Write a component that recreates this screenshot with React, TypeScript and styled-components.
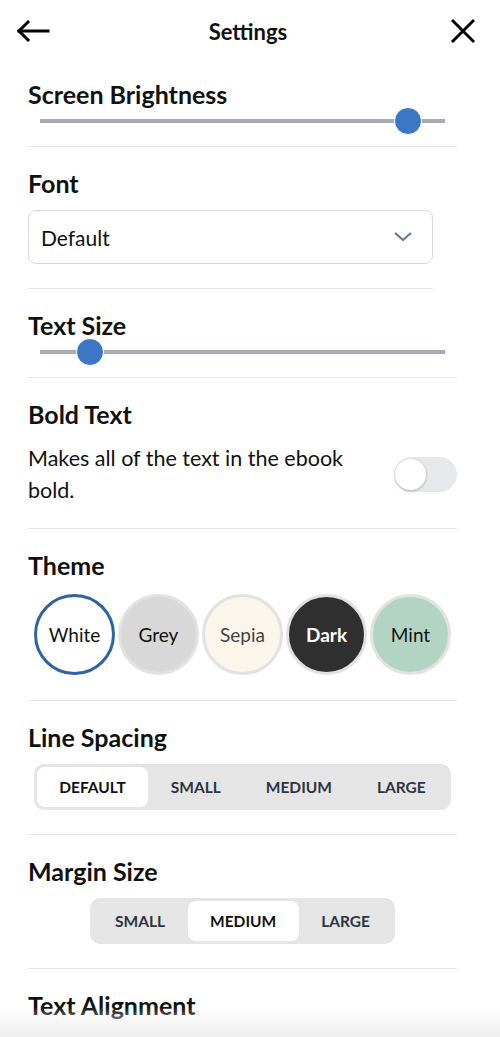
import React from "react";
import styled, { createGlobalStyle } from "styled-components";

const GlobalStyle = createGlobalStyle`
  html, body { margin: 0; padding: 0; background: #ffffff; }
  body { font-family: "Lato", "Liberation Sans", sans-serif; color: #111111; }
  * { box-sizing: border-box; }
`;

const Page = styled.div`
  width: 500px;
  min-height: 1037px;
  background: #fff;
  position: relative;
  overflow: hidden;
`;

const Header = styled.header`
  height: 62px;
  display: flex;
  align-items: center;
  justify-content: space-between;
  padding: 0 20px 0 16px;
`;

const IconButton = styled.button`
  border: none;
  background: none;
  padding: 0;
  width: 34px;
  height: 34px;
  display: flex;
  align-items: center;
  justify-content: center;
  color: #000;
`;

const Title = styled.h1`
  margin: 0;
  font-size: 22px;
  font-weight: 700;
`;

const Content = styled.main`
  padding: 0 43px 0 28px;
`;

const Section = styled.section<{ $top?: number; $bottom: number; $narrow?: boolean }>`
  padding-top: ${(p) => p.$top ?? 22}px;
  padding-bottom: ${(p) => p.$bottom}px;
  border-bottom: 1px solid #e6e6e8;
  width: ${(p) => (p.$narrow ? "405px" : "auto")};
  &:last-child { border-bottom: none; }
`;

const Heading = styled.h2<{ $gap?: number }>`
  margin: 0 0 ${(p) => p.$gap ?? 0}px;
  font-size: 25px;
  line-height: 28px;
  font-weight: 700;
`;

const SliderWrap = styled.div`
  position: relative;
  height: 26px;
  margin: 0 12px;
  display: flex;
  align-items: center;
`;

const Track = styled.div`
  width: 100%;
  height: 4px;
  background: #a7abb5;
`;

const Thumb = styled.div`
  position: absolute;
  top: 50%;
  width: 28px;
  height: 28px;
  margin: -14px 0 0 -14px;
  border-radius: 50%;
  background: #3b77c4;
  border: 1px solid #ffffff;
`;

const Select = styled.div`
  height: 54px;
  border: 1px solid #d6d9de;
  border-radius: 8px;
  display: flex;
  align-items: center;
  justify-content: space-between;
  padding: 0 20px 0 12px;
  font-size: 21px;
`;

const Row = styled.div`
  display: flex;
  align-items: center;
  justify-content: space-between;
  gap: 20px;
`;

const Description = styled.p`
  margin: 0;
  font-size: 21.5px;
  line-height: 32px;
  max-width: 340px;
`;

const Toggle = styled.div`
  width: 63px;
  height: 35px;
  border-radius: 18px;
  background: #e7e8ec;
  position: relative;
  flex-shrink: 0;
`;

const Knob = styled.div`
  position: absolute;
  left: 1px;
  top: 2px;
  width: 31px;
  height: 31px;
  border-radius: 50%;
  background: #fff;
  box-shadow: 0 1px 3px rgba(0, 0, 0, 0.25);
`;

const Swatches = styled.div`
  display: flex;
  justify-content: center;
  gap: 3px;
`;

const Swatch = styled.button<{ $bg: string; $fg: string; $active?: boolean }>`
  width: 81px;
  height: 81px;
  border-radius: 50%;
  background: ${(p) => p.$bg};
  color: ${(p) => p.$fg};
  border: ${(p) => (p.$active ? "3px solid #2f62a6" : "3px solid #e2e2e2")};
  font-family: "Lato", "Liberation Sans", sans-serif;
  font-size: 19px;
  font-weight: ${(p) => (p.$fg === "#ffffff" ? 700 : 400)};
  padding: 0;
  display: flex;
  align-items: center;
  justify-content: center;
`;

const SegmentWrap = styled.div`
  display: flex;
  justify-content: center;
`;

const Segmented = styled.div`
  display: inline-flex;
  background: #e5e5e5;
  border-radius: 10px;
  padding: 3px;
`;

const Segment = styled.button<{ $active?: boolean }>`
  border: none;
  height: 40px;
  padding: 0 22.5px;
  border-radius: 8px;
  background: ${(p) => (p.$active ? "#ffffff" : "transparent")};
  color: ${(p) => (p.$active ? "#111111" : "#2c3442")};
  font-family: "Lato", "Liberation Sans", sans-serif;
  font-size: 15.5px;
  font-weight: 700;
`;

const BottomFade = styled.div`
  position: fixed;
  left: 0;
  right: 0;
  bottom: 0;
  height: 30px;
  background: linear-gradient(to bottom, rgba(240, 240, 240, 0), rgba(238, 238, 238, 1));
  pointer-events: none;
`;

const themes = [
  { name: "White", bg: "#ffffff", fg: "#111111", active: true },
  { name: "Grey", bg: "#d8d8d8", fg: "#111111" },
  { name: "Sepia", bg: "#fbf6eb", fg: "#444444" },
  { name: "Dark", bg: "#2f2f2f", fg: "#ffffff" },
  { name: "Mint", bg: "#b4d4c3", fg: "#111111" },
];

function Slider({ value }: { value: number }) {
  return (
    <SliderWrap>
      <Track />
      <Thumb style={{ left: `${value}%` }} />
    </SliderWrap>
  );
}

function SegmentGroup({ items, active }: { items: string[]; active: string }) {
  return (
    <SegmentWrap>
      <Segmented>
        {items.map((it) => (
          <Segment key={it} $active={it === active}>
            {it}
          </Segment>
        ))}
      </Segmented>
    </SegmentWrap>
  );
}

export default function App() {
  return (
    <>
      <GlobalStyle />
      <Page>
        <Header>
          <IconButton aria-label="Back">
            <svg width="34" height="24" viewBox="0 0 34 24" fill="none" stroke="#000" strokeWidth="3" strokeLinecap="square">
              <path d="M3 12 H32" />
              <path d="M12 3 L3 12 L12 21" />
            </svg>
          </IconButton>
          <Title>Settings</Title>
          <IconButton aria-label="Close">
            <svg width="26" height="26" viewBox="0 0 26 26" fill="none" stroke="#000" strokeWidth="3">
              <path d="M2 2 L24 24 M24 2 L2 24" />
            </svg>
          </IconButton>
        </Header>
        <Content>
          <Section $top={18} $bottom={12}>
            <Heading>Screen Brightness</Heading>
            <Slider value={90.8} />
          </Section>
          <Section $bottom={24} $narrow>
            <Heading $gap={13}>Font</Heading>
            <Select>
              <span>Default</span>
              <svg width="18" height="10" viewBox="0 0 18 10" fill="none" stroke="#6b7280" strokeWidth="2">
                <path d="M1 1 L9 8 L17 1" />
              </svg>
            </Select>
          </Section>
          <Section $bottom={12}>
            <Heading>Text Size</Heading>
            <Slider value={12.3} />
          </Section>
          <Section $bottom={22}>
            <Heading $gap={14}>Bold Text</Heading>
            <Row>
              <Description>Makes all of the text in the ebook bold.</Description>
              <Toggle>
                <Knob />
              </Toggle>
            </Row>
          </Section>
          <Section $bottom={25}>
            <Heading $gap={15}>Theme</Heading>
            <Swatches>
              {themes.map((t) => (
                <Swatch key={t.name} $bg={t.bg} $fg={t.fg} $active={t.active}>
                  {t.name}
                </Swatch>
              ))}
            </Swatches>
          </Section>
          <Section $bottom={24}>
            <Heading $gap={13}>Line Spacing</Heading>
            <SegmentGroup items={["DEFAULT", "SMALL", "MEDIUM", "LARGE"]} active="DEFAULT" />
          </Section>
          <Section $bottom={24}>
            <Heading $gap={13}>Margin Size</Heading>
            <SegmentGroup items={["SMALL", "MEDIUM", "LARGE"]} active="MEDIUM" />
          </Section>
          <Section $bottom={0}>
            <Heading>Text Alignment</Heading>
          </Section>
        </Content>
        <BottomFade />
      </Page>
    </>
  );
}
